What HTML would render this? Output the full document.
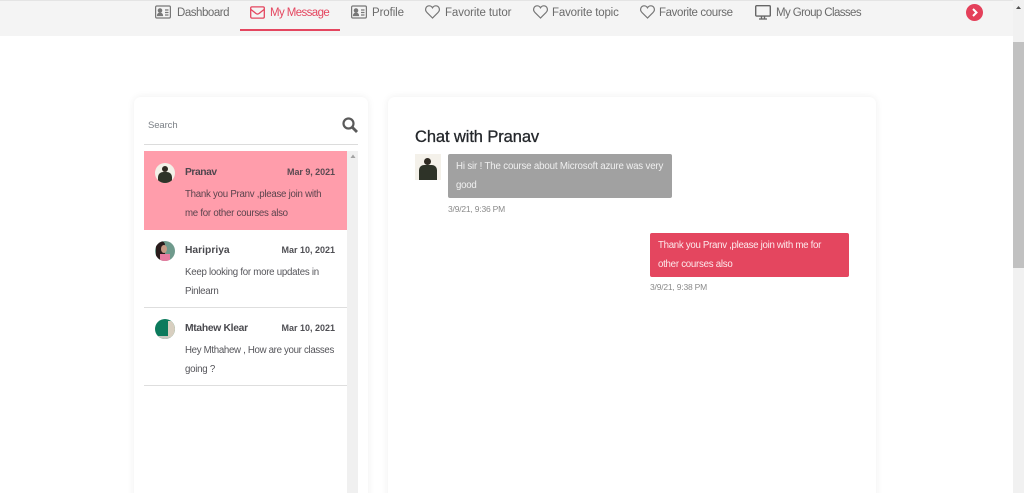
<!DOCTYPE html>
<html><head><meta charset="utf-8"><style>
html,body{margin:0;padding:0;width:1024px;height:493px;overflow:hidden;background:#fff;font-family:"Liberation Sans",sans-serif}
#w{position:relative;width:1024px;height:493px;overflow:hidden;filter:blur(.3px)}
.a{position:absolute;white-space:nowrap}
.nav{font-size:11.5px;color:#6b6b6b;top:6.5px;line-height:13px;letter-spacing:-.1px}
svg{position:absolute;overflow:visible}
.card{position:absolute;background:#fff;border-radius:7px;box-shadow:0 0 8px rgba(0,0,0,.07)}
.n{font-size:10.3px;font-weight:bold;color:#4a4a4f;line-height:12px}
.d{font-size:9px;font-weight:bold;color:#4f4f54;line-height:12px}
.m{font-size:9.7px;color:#55555a;line-height:12px;letter-spacing:-.26px}
.av{position:absolute;width:20px;height:20px;border-radius:50%;overflow:hidden}
</style></head><body><div id="w">
<div class="a" style="left:0;top:0;width:1013px;height:36px;background:#f4f4f4;border-top:1px solid #e4e4e4;box-sizing:border-box"></div>

<svg style="left:155px;top:5px" width="16" height="14" viewBox="0 0 16 14" fill="none" stroke="#777" stroke-width="1.2"><rect x=".6" y="1" width="14.8" height="12" rx="1.2"/><circle cx="5" cy="5.5" r="1.7" fill="#777"/><path d="M2.5 10.5c.3-3 4.7-3 5 0z" fill="#777"/><path d="M10 5h3.5M10 7.5h3.5M10 10h3.5"/></svg>
<div class="a nav" style="left:177px;letter-spacing:-.47px">Dashboard</div>
<svg style="left:250px;top:5.5px" width="15" height="13" viewBox="0 0 15 13" fill="none" stroke="#e4465f" stroke-width="1.3"><rect x=".7" y=".9" width="13.6" height="11.2" rx="1.2"/><path d="M.8 3.4l5.2 4.1c.9.7 2.1.7 3 0l5.2-4.1"/></svg>
<div class="a nav" style="left:270px;color:#e4465f;letter-spacing:-.6px">My Message</div>
<div class="a" style="left:240px;top:29px;width:100px;height:2px;background:#e4465f"></div>
<svg style="left:351px;top:5px" width="16" height="14" viewBox="0 0 16 14" fill="none" stroke="#777" stroke-width="1.2"><rect x=".6" y="1" width="14.8" height="12" rx="1.2"/><circle cx="5" cy="5.5" r="1.7" fill="#777"/><path d="M2.5 10.5c.3-3 4.7-3 5 0z" fill="#777"/><path d="M10 5h3.5M10 7.5h3.5M10 10h3.5"/></svg>
<div class="a nav" style="left:372px">Profile</div>
<svg style="left:425px;top:5px" width="15" height="14" viewBox="0 0 15 14" fill="none" stroke="#777" stroke-width="1.2"><path d="M7.5 13L1.9 7.4C-.9 4.4 1.3.8 4.2.8c1.5 0 2.6.8 3.3 2 .7-1.2 1.8-2 3.3-2 2.9 0 5.1 3.6 2.3 6.6z"/></svg>
<div class="a nav" style="left:445px">Favorite tutor</div>
<svg style="left:533px;top:5px" width="15" height="14" viewBox="0 0 15 14" fill="none" stroke="#777" stroke-width="1.2"><path d="M7.5 13L1.9 7.4C-.9 4.4 1.3.8 4.2.8c1.5 0 2.6.8 3.3 2 .7-1.2 1.8-2 3.3-2 2.9 0 5.1 3.6 2.3 6.6z"/></svg>
<div class="a nav" style="left:552px;letter-spacing:-.17px">Favorite topic</div>
<svg style="left:640px;top:5px" width="15" height="14" viewBox="0 0 15 14" fill="none" stroke="#777" stroke-width="1.2"><path d="M7.5 13L1.9 7.4C-.9 4.4 1.3.8 4.2.8c1.5 0 2.6.8 3.3 2 .7-1.2 1.8-2 3.3-2 2.9 0 5.1 3.6 2.3 6.6z"/></svg>
<div class="a nav" style="left:659px;letter-spacing:-.37px">Favorite course</div>
<svg style="left:755px;top:4.5px" width="16" height="15" viewBox="0 0 16 15" fill="none" stroke="#666" stroke-width="1.4"><rect x=".7" y=".7" width="14.6" height="10.4" rx="1"/><path d="M6.5 11.5v2M9.5 11.5v2" /><path d="M4 14h8" stroke-width="1.3"/></svg>
<div class="a nav" style="left:776px;letter-spacing:-.6px">My Group Classes</div>
<div class="a" style="left:966px;top:4px;width:17px;height:17px;border-radius:50%;background:#e4405a"></div>
<svg style="left:966px;top:4px" width="17" height="17" fill="none" stroke="#fff" stroke-width="2"><path d="M7 5l3.5 3.5L7 12"/></svg>

<!-- page scrollbar -->
<div class="a" style="left:1013px;top:0;width:11px;height:493px;background:#f1f1f1"></div>
<div class="a" style="left:1013px;top:42px;width:11px;height:226px;background:#c1c1c1"></div>
<svg style="left:1015px;top:5px" width="7" height="5"><path d="M3.5 1L6 4H1z" fill="#505050"/></svg>

<!-- left card -->
<div class="card" style="left:134px;top:97px;width:234px;height:410px"></div>
<div class="a" style="left:148px;top:120px;font-size:9.5px;line-height:12px;color:#7a7f85;letter-spacing:-.1px">Search</div>
<svg style="left:342px;top:117px" width="16" height="16" fill="none" stroke="#5a5a5a" stroke-width="2.2"><circle cx="6.5" cy="6.5" r="5"/><path d="M10 10l5 5" stroke-width="2.8"/></svg>
<div class="a" style="left:144px;top:144px;width:214px;height:1px;background:#dcdcdc"></div>
<div class="a" style="left:347px;top:151px;width:11px;height:342px;background:#f0f0f0"></div>
<svg style="left:350px;top:154px" width="6" height="5"><path d="M3 .5L5.5 4H.5z" fill="#a3a3a3"/></svg>

<div class="a" style="left:144px;top:151px;width:203px;height:79px;background:#ff9dab"></div>
<div class="av" style="left:155px;top:163px;background:#f3f1e8"><div style="position:absolute;left:7px;top:3px;width:6px;height:6px;border-radius:50%;background:#2f2a22"></div><div style="position:absolute;left:3px;top:9px;width:14px;height:11px;border-radius:5px 5px 0 0;background:#2e3328"></div></div>
<div class="a n" style="left:185px;top:166.5px;color:#50464e;letter-spacing:-.45px">Pranav</div>
<div class="a d" style="right:689px;top:166px;color:#5a4a52;letter-spacing:-.05px">Mar 9, 2021</div>
<div class="a m" style="left:185px;top:189px;color:#5a434d">Thank you Pranv ,please join with</div>
<div class="a m" style="left:185px;top:207.5px;color:#5a434d">me for other courses also</div>

<div class="av" style="left:155px;top:241px;background:#6f9a8c"><div style="position:absolute;left:1px;top:0;width:9px;height:20px;background:#2a1c1c;border-radius:4px"></div><div style="position:absolute;left:5px;top:13px;width:10px;height:7px;background:#e87ba0"></div><div style="position:absolute;left:6px;top:4px;width:6px;height:8px;border-radius:50%;background:#c99a85"></div></div>
<div class="a n" style="left:185px;top:244.5px">Haripriya</div>
<div class="a d" style="right:689px;top:244px">Mar 10, 2021</div>
<div class="a m" style="left:185px;top:267px">Keep looking for more updates in</div>
<div class="a m" style="left:185px;top:285.5px">Pinlearn</div>
<div class="a" style="left:144px;top:307px;width:203px;height:1px;background:#dedede"></div>

<div class="av" style="left:155px;top:319px;background:#0b7a5c"><div style="position:absolute;left:0;top:17px;width:20px;height:3px;background:#c8c8c0"></div><div style="position:absolute;left:13px;top:2px;width:7px;height:16px;background:#d8cfc0"></div></div>
<div class="a n" style="left:185px;top:322.5px;letter-spacing:-.3px">Mtahew Klear</div>
<div class="a d" style="right:689px;top:322px">Mar 10, 2021</div>
<div class="a m" style="left:185px;top:345px;letter-spacing:-.32px">Hey Mthahew , How are your classes</div>
<div class="a m" style="left:185px;top:363.5px">going ?</div>
<div class="a" style="left:144px;top:385px;width:203px;height:1px;background:#dedede"></div>

<!-- right card -->
<div class="card" style="left:388px;top:97px;width:488px;height:410px"></div>
<div class="a" style="left:415px;top:128px;font-size:16.5px;line-height:19px;color:#24272b;letter-spacing:-.1px;-webkit-text-stroke:.3px #24272b">Chat with Pranav</div>
<div class="a" style="left:415px;top:154px;width:26px;height:26px;background:#f4f1ea;overflow:hidden"><div style="position:absolute;left:9px;top:4px;width:7px;height:7px;border-radius:50%;background:#2f2a22"></div><div style="position:absolute;left:4px;top:11px;width:18px;height:15px;border-radius:5px 5px 0 0;background:#2e3328"></div></div>
<div class="a" style="left:448px;top:154px;width:224px;height:44px;background:#a1a1a1;border-radius:2px"></div>
<div class="a m" style="left:456px;top:160.5px;color:#f0f0f0;letter-spacing:-.16px">Hi sir ! The course about Microsoft azure was very</div>
<div class="a m" style="left:456px;top:179.5px;color:#f0f0f0">good</div>
<div class="a" style="left:448px;top:204px;font-size:8.5px;line-height:11px;color:#8a8a8a;letter-spacing:-.2px">3/9/21, 9:36 PM</div>
<div class="a" style="left:650px;top:233px;width:199px;height:44px;background:#e4465f;border-radius:2px"></div>
<div class="a m" style="left:658px;top:239.5px;color:#fdeaed;letter-spacing:-.3px">Thank you Pranv ,please join with me for</div>
<div class="a m" style="left:658px;top:258.5px;color:#fdeaed">other courses also</div>
<div class="a" style="left:650px;top:282px;font-size:8.5px;line-height:11px;color:#8a8a8a;letter-spacing:-.2px">3/9/21, 9:38 PM</div>
</div></body></html>
